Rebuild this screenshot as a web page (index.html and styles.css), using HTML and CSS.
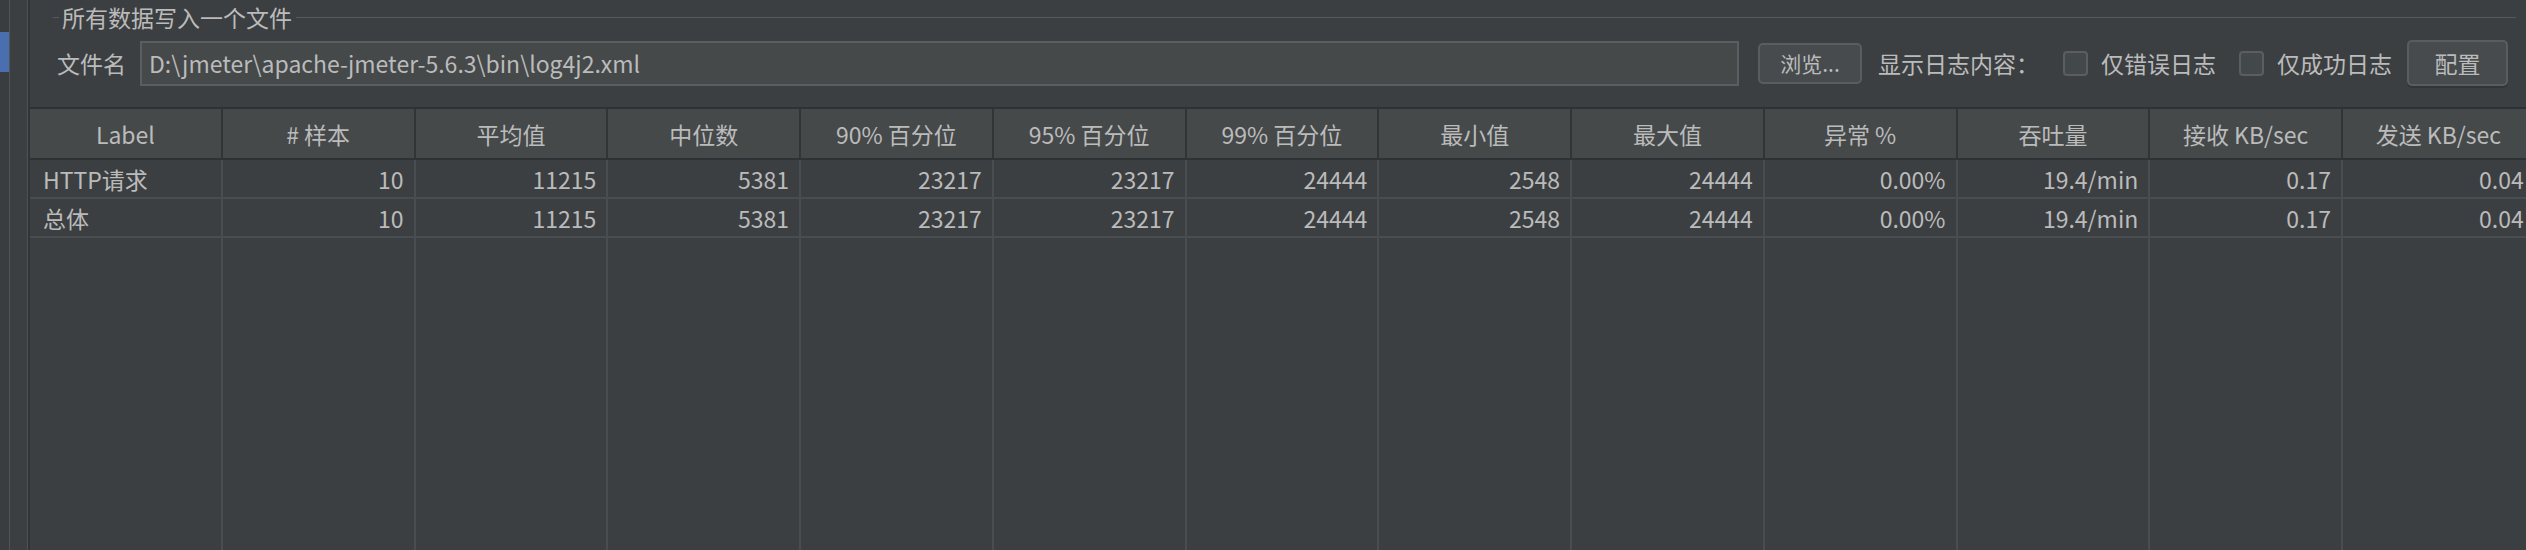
FILE: index.html
```html
<!DOCTYPE html>
<html lang="zh-CN">
<head>
<meta charset="utf-8">
<title>聚合报告</title>
<link rel="stylesheet" href="styles.css">
</head>
<body>
<div class="app">
  <aside class="rail"><div class="rail-mark"></div></aside>
  <div class="divider"></div>
  <main class="main">
    <div class="group-title">
      <span class="gt-lead"></span>
      <span class="gt-text">所有数据写入一个文件</span>
      <span class="gt-line"></span>
    </div>
    <div class="file-row">
      <span class="file-label">文件名</span>
      <div class="text-field">D:\jmeter\apache-jmeter-5.6.3\bin\log4j2.xml</div>
      <button class="btn btn-browse">浏览...</button>
      <span class="log-label">显示日志内容：</span>
      <span class="check check-first"><span class="box"></span>仅错误日志</span>
      <span class="check"><span class="box"></span>仅成功日志</span>
      <button class="btn btn-config">配置</button>
    </div>
    <div class="table">
      <div class="row head">
        <div class="cell">Label</div>
        <div class="cell"># 样本</div>
        <div class="cell">平均值</div>
        <div class="cell">中位数</div>
        <div class="cell">90% 百分位</div>
        <div class="cell">95% 百分位</div>
        <div class="cell">99% 百分位</div>
        <div class="cell">最小值</div>
        <div class="cell">最大值</div>
        <div class="cell">异常 %</div>
        <div class="cell">吞吐量</div>
        <div class="cell">接收 KB/sec</div>
        <div class="cell">发送 KB/sec</div>
      </div>
      <div class="row data">
        <div class="cell label">HTTP请求</div>
        <div class="cell">10</div>
        <div class="cell">11215</div>
        <div class="cell">5381</div>
        <div class="cell">23217</div>
        <div class="cell">23217</div>
        <div class="cell">24444</div>
        <div class="cell">2548</div>
        <div class="cell">24444</div>
        <div class="cell">0.00%</div>
        <div class="cell">19.4/min</div>
        <div class="cell">0.17</div>
        <div class="cell">0.04</div>
      </div>
      <div class="row data">
        <div class="cell label">总体</div>
        <div class="cell">10</div>
        <div class="cell">11215</div>
        <div class="cell">5381</div>
        <div class="cell">23217</div>
        <div class="cell">23217</div>
        <div class="cell">24444</div>
        <div class="cell">2548</div>
        <div class="cell">24444</div>
        <div class="cell">0.00%</div>
        <div class="cell">19.4/min</div>
        <div class="cell">0.17</div>
        <div class="cell">0.04</div>
      </div>
      <div class="row filler">
        <div class="cell"></div><div class="cell"></div><div class="cell"></div>
        <div class="cell"></div><div class="cell"></div><div class="cell"></div>
        <div class="cell"></div><div class="cell"></div><div class="cell"></div>
        <div class="cell"></div><div class="cell"></div><div class="cell"></div>
        <div class="cell"></div>
      </div>
    </div>
  </main>
</div>
</body>
</html>
```

FILE: styles.css
```css
* { box-sizing: border-box; }

html, body {
  margin: 0;
  padding: 0;
  background: #3c3f41;
  width: 2526px;
  height: 550px;
  overflow: hidden;
}

body {
  font-family: "Noto Sans CJK SC", "Noto Sans", sans-serif;
  font-size: 23px;
  color: #bbbbbb;
}

.app {
  display: flex;
  height: 550px;
}

.rail {
  width: 9px;
  flex: none;
  background: #3a3d3f;
  padding-top: 32px;
}

.rail-mark {
  width: 9px;
  height: 40px;
  background: #4a6fb0;
}

.divider {
  width: 19px;
  flex: none;
  border-left: 1px solid #505457;
  border-right: 1px solid #4e5254;
}

.main {
  flex: 1;
  min-width: 0;
  border-left: 2px solid #313335;
  overflow: hidden;
}

.group-title {
  display: flex;
  align-items: center;
  height: 35px;
  padding-left: 23px;
  padding-right: 10px;
}

.gt-lead {
  width: 6px;
  height: 1px;
  background: #56595b;
  flex: none;
}

.gt-text {
  padding: 0 4px 0 3px;
  line-height: 1;
  white-space: nowrap;
}

.gt-line {
  flex: 1;
  height: 1px;
  background: #56595b;
}

.file-row {
  display: flex;
  align-items: center;
  height: 46px;
  margin-top: 5px;
  padding-left: 27px;
  padding-right: 18px;
  white-space: nowrap;
}

.file-label {
  margin-right: 14px;
}

.text-field {
  flex: 1;
  height: 45px;
  background: #45494a;
  border: 2px solid #5b5e60;
  display: flex;
  align-items: center;
  padding-left: 7px;
  font-size: 23px;
}

.btn {
  font-family: inherit;
  font-size: 21px;
  color: #bbbbbb;
  background: #474b4d;
  border: 2px solid #5a5d5f;
  border-radius: 5px;
  padding: 0;
  flex: none;
}

.btn-browse {
  width: 104px;
  height: 41px;
  margin-left: 19px;
}

.btn-config {
  width: 101px;
  height: 46px;
  margin-left: 15px;
  font-size: 23px;
  box-shadow: 0 2px 0 #333537;
}

.log-label {
  margin-left: 16px;
}

.check {
  display: flex;
  align-items: center;
  margin-left: 23px;
}

.check-first {
  margin-left: 24px;
}

.box {
  width: 25px;
  height: 25px;
  border: 2px solid #5b5e60;
  border-radius: 4px;
  background: #43484a;
  margin-right: 13px;
  flex: none;
}

.table {
  margin-top: 21px;
  border-top: 2px solid #2f3234;
  display: flex;
  flex-direction: column;
}

.row {
  display: grid;
  grid-template-columns: repeat(13, 192.75px);
}

.cell {
  border-right: 2px solid #4a4d4f;
  white-space: nowrap;
  overflow: hidden;
}

.head .cell {
  height: 51px;
  background: #45494a;
  border-right: 2px solid #323537;
  border-bottom: 2px solid #2f3234;
  display: flex;
  align-items: center;
  justify-content: center;
}

.data .cell {
  height: 39px;
  border-bottom: 2px solid #4a4d4f;
  display: flex;
  align-items: center;
  justify-content: flex-end;
  padding-right: 10px;
}

.data .cell.label {
  justify-content: flex-start;
  padding-left: 13px;
  padding-right: 0;
}

.filler .cell {
  height: 330px;
}
```
